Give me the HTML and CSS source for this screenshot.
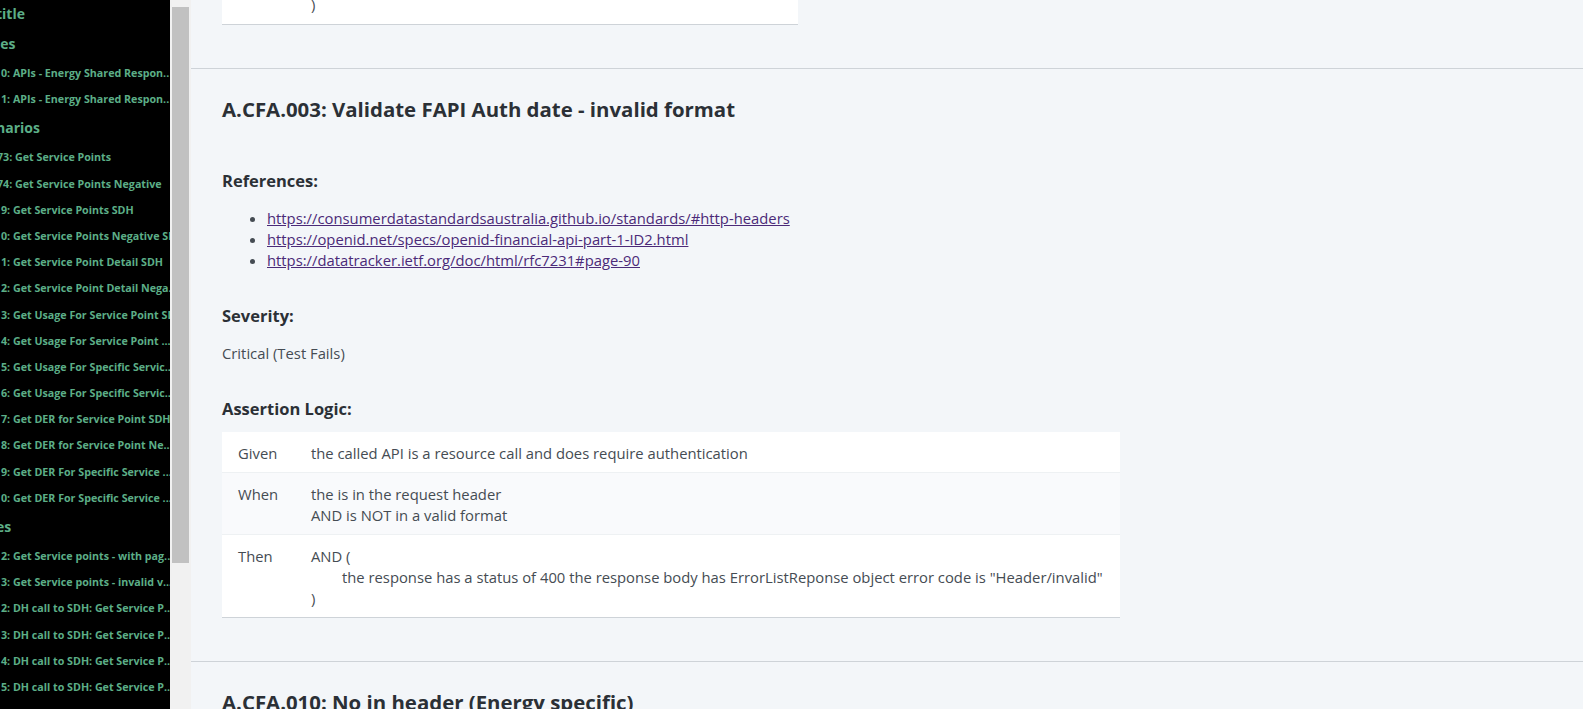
FILE: index.html
```html
<!DOCTYPE html>
<html lang="en">
<head>
  <meta charset="UTF-8">
  <title>Test Plan</title>
  <link rel="stylesheet" href="styles.css">
</head>
<body>

<nav class="sidebar">
  <div class="nav-head first">title</div>
  <div class="nav-head nudge">ces</div>
  <a class="nav-item">0: APIs - Energy Shared Respon..</a>
  <a class="nav-item">1: APIs - Energy Shared Respon..</a>
  <div class="nav-head">narios</div>
  <a class="nav-item cut">73: Get Service Points</a>
  <a class="nav-item cut">74: Get Service Points Negative</a>
  <a class="nav-item">9: Get Service Points SDH</a>
  <a class="nav-item">0: Get Service Points Negative SDH</a>
  <a class="nav-item">1: Get Service Point Detail SDH</a>
  <a class="nav-item">2: Get Service Point Detail Nega...</a>
  <a class="nav-item">3: Get Usage For Service Point SDH</a>
  <a class="nav-item">4: Get Usage For Service Point ...</a>
  <a class="nav-item">5: Get Usage For Specific Servic...</a>
  <a class="nav-item">6: Get Usage For Specific Servic...</a>
  <a class="nav-item">7: Get DER for Service Point SDH</a>
  <a class="nav-item">8: Get DER for Service Point Ne...</a>
  <a class="nav-item">9: Get DER For Specific Service ...</a>
  <a class="nav-item">0: Get DER For Specific Service ...</a>
  <div class="nav-head">es</div>
  <a class="nav-item">2: Get Service points - with pag...</a>
  <a class="nav-item">3: Get Service points - invalid v...</a>
  <a class="nav-item">2: DH call to SDH: Get Service P...</a>
  <a class="nav-item">3: DH call to SDH: Get Service P...</a>
  <a class="nav-item">4: DH call to SDH: Get Service P...</a>
  <a class="nav-item">5: DH call to SDH: Get Service P...</a>
</nav>

<div class="scroll-track"><div class="scroll-thumb"></div></div>

<main class="content">
  <section class="case case-top">
    <div class="prev-table"><div class="prev-line">)</div></div>
  </section>

  <section class="case">
    <h2>A.CFA.003: Validate FAPI Auth date - invalid format</h2>

    <h4 class="refs-title">References:</h4>
    <ul class="refs">
      <li><a href="#a">https://consumerdatastandardsaustralia.github.io/standards/#http-headers</a></li>
      <li><a href="#b">https://openid.net/specs/openid-financial-api-part-1-ID2.html</a></li>
      <li><a href="#c">https://datatracker.ietf.org/doc/html/rfc7231#page-90</a></li>
    </ul>

    <h4 class="sev-title">Severity:</h4>
    <p class="sev">Critical (Test Fails)</p>

    <h4 class="logic-title">Assertion Logic:</h4>
    <table class="logic">
      <tr>
        <td class="step">Given</td>
        <td>the called API is a resource call and does require authentication</td>
      </tr>
      <tr class="alt">
        <td class="step">When</td>
        <td>the is in the request header<br>AND is NOT in a valid format</td>
      </tr>
      <tr>
        <td class="step">Then</td>
        <td>AND (<div class="indent">the response has a status of 400 the response body has ErrorListReponse object error code is "Header/invalid"</div>)</td>
      </tr>
    </table>
  </section>

  <section class="case">
    <h2>A.CFA.010: No in header (Energy specific)</h2>
  </section>
</main>

</body>
</html>
```

FILE: styles.css
```css
* { box-sizing: border-box; }
html, body {
  margin: 0;
  height: 709px;
  overflow: hidden;
}
body {
  display: flex;
  font-family: "Open Sans", "Noto Sans", sans-serif;
  font-size: 14.8px;
  line-height: 21px;
  color: #454c53;
  background: #fff;
}

.sidebar {
  width: 170px;
  flex: none;
  background: #000;
  overflow: hidden;
  padding-left: 1px;
}
.nav-head {
  height: 32px;
  line-height: 32px;
  margin-left: -5px;
  font-size: 14px;
  font-weight: 700;
  color: #5cae87;
  white-space: nowrap;
}
.nav-head.first {
  height: 28px;
  line-height: 28px;
}
.nav-head.nudge { margin-left: -8px; }
.nav-item {
  display: block;
  height: 26.2px;
  line-height: 26.2px;
  font-size: 10.7px;
  font-weight: 700;
  color: #5cae87;
  white-space: nowrap;
}
.cut { margin-left: -4px; }

.scroll-track {
  width: 21px;
  flex: none;
  background: #f1f1f1;
  padding: 7px 2px 0 2px;
}
.scroll-thumb {
  height: 556px;
  background: #c1c1c1;
}

.content {
  flex: 1;
  min-width: 0;
  background: #f3f6f9;
}
.case {
  padding: 0 31px;
  border-bottom: 1px solid #ced3d8;
}
.case:last-child { border-bottom: none; }
.case-top { height: 69px; }
.prev-table {
  width: 576px;
  height: 25px;
  background: #fff;
  border-bottom: 1px solid #ced3d8;
  padding-left: 89px;
  overflow: hidden;
}
.prev-line { margin-top: -6px; }

h2 {
  margin: 0;
  padding-top: 26px;
  font-size: 20.4px;
  line-height: 28px;
  font-weight: 700;
  color: #2b3036;
}
h4 {
  margin: 0;
  font-size: 16.5px;
  line-height: 24px;
  font-weight: 700;
  color: #2b3036;
}
.refs-title { margin-top: 46px; }
.refs {
  margin: 15px 0 0;
  padding-left: 45px;
}
.refs a { color: #4b2a78; }
.sev-title { margin-top: 33px; }
.sev { margin: 15px 0 0; }
.logic-title { margin-top: 33px; }

.logic {
  margin: 11px 0 43px;
  width: 898px;
  border-collapse: collapse;
  background: #fff;
  border-bottom: 1px solid #ced3d8;
}
.logic td {
  padding: 11px 16px 8px;
  vertical-align: top;
}
.logic tr + tr td { border-top: 1px solid #eef1f3; }
.logic .alt { background: #f9fafc; }
.logic .step { width: 73px; }
.indent { padding-left: 31px; }
```
